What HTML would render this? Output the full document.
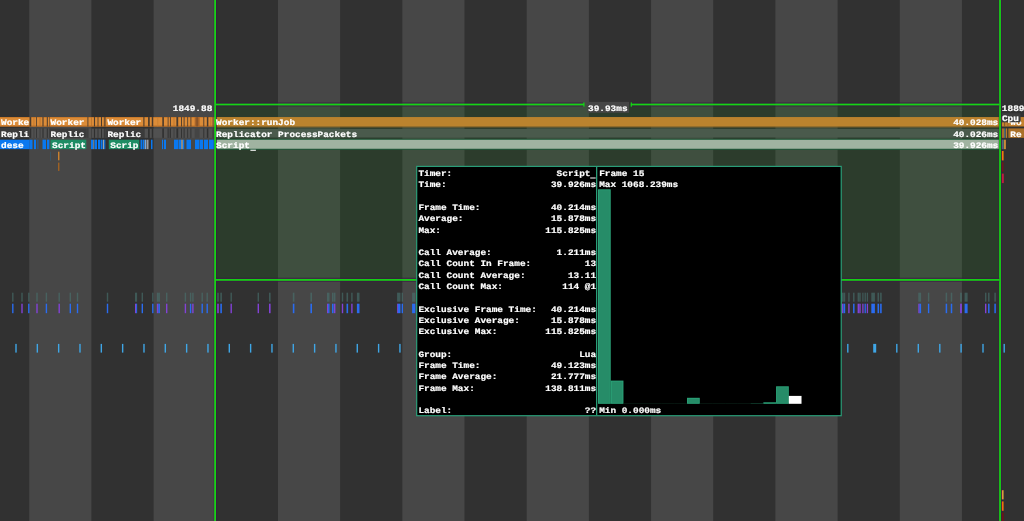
<!DOCTYPE html>
<html><head><meta charset="utf-8"><title>MicroProfile</title>
<style>
html,body{margin:0;padding:0;background:#313131;overflow:hidden}
body{width:1024px;height:521px;font-family:"Liberation Mono",monospace}
svg{display:block;will-change:transform;text-rendering:geometricPrecision}
</style></head><body>
<svg width="1024" height="521" viewBox="0 0 1024 521">
<rect x="0.00" y="0.00" width="1024.00" height="521.00" fill="#313131"/>
<rect x="29.25" y="0.00" width="62.18" height="521.00" fill="#474747"/>
<rect x="153.61" y="0.00" width="62.18" height="521.00" fill="#474747"/>
<rect x="277.97" y="0.00" width="62.18" height="521.00" fill="#474747"/>
<rect x="402.33" y="0.00" width="62.18" height="521.00" fill="#474747"/>
<rect x="526.69" y="0.00" width="62.18" height="521.00" fill="#474747"/>
<rect x="651.05" y="0.00" width="62.18" height="521.00" fill="#474747"/>
<rect x="775.41" y="0.00" width="62.18" height="521.00" fill="#474747"/>
<rect x="899.77" y="0.00" width="62.18" height="521.00" fill="#474747"/>
<rect x="0.00" y="117.05" width="215.00" height="9.45" fill="#dc8c38"/>
<rect x="0.00" y="117.05" width="215.00" height="0.80" fill="#c87828"/>
<rect x="0.00" y="125.60" width="215.00" height="0.90" fill="#b86a22"/>
<rect x="29.55" y="117.05" width="1.70" height="9.45" fill="#4a3a2c"/>
<rect x="36.10" y="117.05" width="0.80" height="9.45" fill="#4a3a2c"/>
<rect x="42.45" y="117.05" width="1.10" height="9.45" fill="#4a3a2c"/>
<rect x="46.80" y="117.05" width="1.00" height="9.45" fill="#4a3a2c"/>
<rect x="49.25" y="117.05" width="0.50" height="9.45" fill="#4a3a2c"/>
<rect x="87.45" y="117.05" width="0.90" height="9.45" fill="#4a3a2c"/>
<rect x="93.95" y="117.05" width="1.10" height="9.45" fill="#4a3a2c"/>
<rect x="97.60" y="117.05" width="0.80" height="9.45" fill="#4a3a2c"/>
<rect x="101.00" y="117.05" width="1.00" height="9.45" fill="#4a3a2c"/>
<rect x="103.90" y="117.05" width="0.80" height="9.45" fill="#4a3a2c"/>
<rect x="105.45" y="117.05" width="0.50" height="9.45" fill="#4a3a2c"/>
<rect x="143.35" y="117.05" width="1.10" height="9.45" fill="#4a3a2c"/>
<rect x="148.05" y="117.05" width="1.70" height="9.45" fill="#4a3a2c"/>
<rect x="151.75" y="117.05" width="1.50" height="9.45" fill="#4a3a2c"/>
<rect x="162.30" y="117.05" width="1.60" height="9.45" fill="#4a3a2c"/>
<rect x="167.70" y="117.05" width="0.80" height="9.45" fill="#4a3a2c"/>
<rect x="169.95" y="117.05" width="0.90" height="9.45" fill="#4a3a2c"/>
<rect x="176.40" y="117.05" width="1.80" height="9.45" fill="#4a3a2c"/>
<rect x="181.05" y="117.05" width="0.90" height="9.45" fill="#4a3a2c"/>
<rect x="183.65" y="117.05" width="0.90" height="9.45" fill="#4a3a2c"/>
<rect x="187.30" y="117.05" width="0.80" height="9.45" fill="#4a3a2c"/>
<rect x="190.45" y="117.05" width="0.90" height="9.45" fill="#4a3a2c"/>
<rect x="203.35" y="117.05" width="0.90" height="9.45" fill="#4a3a2c"/>
<rect x="206.85" y="117.05" width="1.50" height="9.45" fill="#4a3a2c"/>
<rect x="212.65" y="117.05" width="0.70" height="9.45" fill="#4a3a2c"/>
<rect x="194.70" y="117.05" width="4.90" height="9.45" fill="#a8652a"/>
<rect x="196.60" y="117.05" width="0.90" height="9.45" fill="#6a4526"/>
<rect x="33.60" y="117.05" width="0.70" height="9.45" fill="#b9722c"/>
<rect x="39.60" y="117.05" width="0.90" height="9.45" fill="#b9722c"/>
<rect x="91.20" y="117.05" width="0.80" height="9.45" fill="#b9722c"/>
<rect x="157.50" y="117.05" width="0.70" height="9.45" fill="#c47c30"/>
<rect x="173.60" y="117.05" width="0.80" height="9.45" fill="#b9722c"/>
<rect x="210.40" y="117.05" width="0.80" height="9.45" fill="#b9722c"/>
<rect x="0.00" y="128.60" width="167.60" height="9.25" fill="#515151"/>
<rect x="170.60" y="128.60" width="44.40" height="9.25" fill="#515151"/>
<rect x="29.55" y="128.40" width="1.70" height="9.45" fill="#303030"/>
<rect x="36.10" y="128.40" width="0.80" height="9.45" fill="#303030"/>
<rect x="42.45" y="128.40" width="1.10" height="9.45" fill="#303030"/>
<rect x="46.80" y="128.40" width="1.00" height="9.45" fill="#303030"/>
<rect x="49.25" y="128.40" width="0.50" height="9.45" fill="#303030"/>
<rect x="87.45" y="128.40" width="0.90" height="9.45" fill="#303030"/>
<rect x="93.95" y="128.40" width="1.10" height="9.45" fill="#303030"/>
<rect x="97.60" y="128.40" width="0.80" height="9.45" fill="#303030"/>
<rect x="101.00" y="128.40" width="1.00" height="9.45" fill="#303030"/>
<rect x="103.90" y="128.40" width="0.80" height="9.45" fill="#303030"/>
<rect x="105.45" y="128.40" width="0.50" height="9.45" fill="#303030"/>
<rect x="143.35" y="128.40" width="1.10" height="9.45" fill="#303030"/>
<rect x="148.05" y="128.40" width="1.70" height="9.45" fill="#303030"/>
<rect x="151.75" y="128.40" width="1.50" height="9.45" fill="#303030"/>
<rect x="162.30" y="128.40" width="1.60" height="9.45" fill="#303030"/>
<rect x="167.70" y="128.40" width="0.80" height="9.45" fill="#303030"/>
<rect x="169.95" y="128.40" width="0.90" height="9.45" fill="#303030"/>
<rect x="176.40" y="128.40" width="1.80" height="9.45" fill="#303030"/>
<rect x="181.05" y="128.40" width="0.90" height="9.45" fill="#303030"/>
<rect x="183.65" y="128.40" width="0.90" height="9.45" fill="#303030"/>
<rect x="187.30" y="128.40" width="0.80" height="9.45" fill="#303030"/>
<rect x="190.45" y="128.40" width="0.90" height="9.45" fill="#303030"/>
<rect x="203.35" y="128.40" width="0.90" height="9.45" fill="#303030"/>
<rect x="206.85" y="128.40" width="1.50" height="9.45" fill="#303030"/>
<rect x="212.65" y="128.40" width="0.70" height="9.45" fill="#303030"/>
<rect x="194.70" y="128.40" width="4.90" height="9.45" fill="#444"/>
<rect x="33.60" y="128.40" width="0.70" height="9.45" fill="#3c3c3c"/>
<rect x="39.60" y="128.40" width="0.90" height="9.45" fill="#3c3c3c"/>
<rect x="91.20" y="128.40" width="0.80" height="9.45" fill="#3c3c3c"/>
<rect x="173.60" y="128.40" width="0.80" height="9.45" fill="#3c3c3c"/>
<rect x="0.00" y="128.40" width="29.20" height="9.45" fill="#3b3b3b"/>
<rect x="49.80" y="128.40" width="37.00" height="9.45" fill="#3b3b3b"/>
<rect x="105.90" y="128.40" width="37.20" height="9.45" fill="#3b3b3b"/>
<rect x="0.00" y="139.70" width="29.70" height="9.45" fill="#0a78f0"/>
<rect x="29.70" y="139.70" width="2.80" height="9.45" fill="#0a78f0"/>
<rect x="34.00" y="139.70" width="2.00" height="9.45" fill="#0a78f0"/>
<rect x="37.40" y="139.70" width="1.00" height="9.45" fill="#1b5ea8"/>
<rect x="42.50" y="139.70" width="3.50" height="9.45" fill="#0a78f0"/>
<rect x="47.00" y="139.70" width="2.40" height="9.45" fill="#0a78f0"/>
<rect x="50.50" y="139.70" width="35.80" height="9.45" fill="#1e8c64"/>
<rect x="91.00" y="139.70" width="2.00" height="9.45" fill="#0a78f0"/>
<rect x="93.30" y="139.70" width="1.00" height="9.45" fill="#8a9aa8"/>
<rect x="94.60" y="139.70" width="2.40" height="9.45" fill="#0a78f0"/>
<rect x="98.00" y="139.70" width="2.00" height="9.45" fill="#0a78f0"/>
<rect x="100.60" y="139.70" width="2.00" height="9.45" fill="#0a78f0"/>
<rect x="103.00" y="139.70" width="1.00" height="9.45" fill="#9aa6ae"/>
<rect x="104.20" y="139.70" width="1.10" height="9.45" fill="#0a78f0"/>
<rect x="108.80" y="139.70" width="30.50" height="9.45" fill="#1e8c64"/>
<rect x="140.50" y="139.70" width="1.50" height="9.45" fill="#0a78f0"/>
<rect x="142.50" y="139.70" width="1.50" height="9.45" fill="#0a78f0"/>
<rect x="144.50" y="139.70" width="1.50" height="9.45" fill="#6fa8e8"/>
<rect x="146.50" y="139.70" width="2.00" height="9.45" fill="#9a9aa0"/>
<rect x="151.00" y="139.70" width="1.50" height="9.45" fill="#0a78f0"/>
<rect x="162.00" y="139.70" width="1.10" height="9.45" fill="#0a78f0"/>
<rect x="164.00" y="139.70" width="2.00" height="9.45" fill="#0a78f0"/>
<rect x="174.00" y="139.70" width="4.00" height="9.45" fill="#0a78f0"/>
<rect x="178.50" y="139.70" width="2.50" height="9.45" fill="#0a78f0"/>
<rect x="181.50" y="139.70" width="1.00" height="9.45" fill="#c8d0d0"/>
<rect x="183.00" y="139.70" width="1.20" height="9.45" fill="#0a78f0"/>
<rect x="186.50" y="139.70" width="4.50" height="9.45" fill="#0a78f0"/>
<rect x="195.00" y="139.70" width="4.00" height="9.45" fill="#0a78f0"/>
<rect x="199.50" y="139.70" width="3.50" height="9.45" fill="#0a78f0"/>
<rect x="204.00" y="139.70" width="4.00" height="9.45" fill="#0a78f0"/>
<rect x="209.00" y="139.70" width="5.60" height="9.45" fill="#0a78f0"/>
<rect x="58.10" y="151.70" width="1.30" height="8.60" fill="#d8882c"/>
<rect x="58.10" y="162.60" width="1.30" height="8.30" fill="#a86420"/>
<rect x="50.10" y="151.70" width="0.80" height="9.00" fill="#32607a" opacity="0.7"/>
<rect x="1001.60" y="117.05" width="22.40" height="9.45" fill="#c4822f"/>
<rect x="1004.20" y="117.05" width="0.90" height="9.45" fill="#7a5428"/>
<rect x="1007.60" y="117.05" width="0.70" height="9.45" fill="#8a5e2a"/>
<rect x="1001.60" y="128.40" width="2.60" height="9.45" fill="#a87028"/>
<rect x="1004.40" y="128.40" width="1.00" height="9.45" fill="#5a88a0"/>
<rect x="1005.90" y="128.40" width="1.30" height="9.45" fill="#b87a2c"/>
<rect x="1008.30" y="128.40" width="15.70" height="9.45" fill="#aa7028"/>
<rect x="1001.60" y="139.70" width="1.00" height="9.45" fill="#7a6a90"/>
<rect x="1002.70" y="139.70" width="0.80" height="9.45" fill="#4a8a9a"/>
<rect x="1003.90" y="139.70" width="2.00" height="9.45" fill="#c88a38"/>
<rect x="1001.60" y="151.00" width="2.00" height="9.45" fill="#f07a10"/>
<rect x="1001.60" y="162.30" width="2.00" height="9.45" fill="#6e1a1c"/>
<rect x="1001.60" y="173.60" width="2.20" height="9.45" fill="#c0203c"/>
<rect x="1001.60" y="490.20" width="2.00" height="9.20" fill="#e09a40"/>
<rect x="1001.60" y="501.40" width="2.00" height="9.40" fill="#f07010"/>
<rect x="1001.60" y="512.60" width="2.20" height="9.00" fill="#6a1818"/>
<rect x="12.10" y="292.70" width="1.40" height="9.00" fill="#4a7571" opacity="0.6"/>
<rect x="12.10" y="303.70" width="1.40" height="9.50" fill="#2a6cf0"/>
<rect x="21.30" y="292.70" width="1.40" height="9.00" fill="#4a7571" opacity="0.6"/>
<rect x="21.30" y="303.70" width="1.40" height="9.50" fill="#8242d6"/>
<rect x="28.10" y="292.70" width="1.40" height="9.00" fill="#4a7571" opacity="0.6"/>
<rect x="28.10" y="303.70" width="1.40" height="9.50" fill="#2a6cf0"/>
<rect x="36.30" y="292.70" width="1.40" height="9.00" fill="#4a7571" opacity="0.6"/>
<rect x="36.30" y="303.70" width="1.40" height="9.50" fill="#8242d6"/>
<rect x="45.70" y="292.70" width="1.40" height="9.00" fill="#4a7571" opacity="0.6"/>
<rect x="45.70" y="303.70" width="1.40" height="9.50" fill="#2a6cf0"/>
<rect x="58.50" y="292.70" width="1.40" height="9.00" fill="#4a7571" opacity="0.6"/>
<rect x="58.50" y="303.70" width="1.40" height="9.50" fill="#8242d6"/>
<rect x="69.60" y="292.70" width="1.40" height="9.00" fill="#4a7571" opacity="0.6"/>
<rect x="69.60" y="303.70" width="1.40" height="9.50" fill="#2a6cf0"/>
<rect x="76.80" y="292.70" width="1.40" height="9.00" fill="#4a7571" opacity="0.6"/>
<rect x="76.80" y="303.70" width="1.40" height="9.50" fill="#2a6cf0"/>
<rect x="106.80" y="292.70" width="1.40" height="9.00" fill="#4a7571" opacity="0.6"/>
<rect x="106.80" y="303.70" width="1.40" height="9.50" fill="#2a6cf0"/>
<rect x="135.00" y="292.70" width="1.20" height="9.00" fill="#4a7571" opacity="0.6"/>
<rect x="135.00" y="303.70" width="1.20" height="9.50" fill="#8242d6"/>
<rect x="136.10" y="292.70" width="1.00" height="9.00" fill="#4a7571" opacity="0.6"/>
<rect x="136.10" y="303.70" width="1.00" height="9.50" fill="#2a6cf0"/>
<rect x="141.60" y="292.70" width="1.40" height="9.00" fill="#4a7571" opacity="0.6"/>
<rect x="141.60" y="303.70" width="1.40" height="9.50" fill="#2a6cf0"/>
<rect x="152.10" y="292.70" width="1.40" height="9.00" fill="#4a7571" opacity="0.6"/>
<rect x="152.10" y="303.70" width="1.40" height="9.50" fill="#2a6cf0"/>
<rect x="156.85" y="292.70" width="1.50" height="9.00" fill="#4a7571" opacity="0.6"/>
<rect x="156.85" y="303.70" width="1.50" height="9.50" fill="#8242d6"/>
<rect x="158.30" y="292.70" width="1.60" height="9.00" fill="#4a7571" opacity="0.6"/>
<rect x="158.30" y="303.70" width="1.60" height="9.50" fill="#2a6cf0"/>
<rect x="166.00" y="292.70" width="1.40" height="9.00" fill="#4a7571" opacity="0.6"/>
<rect x="166.00" y="303.70" width="1.40" height="9.50" fill="#8242d6"/>
<rect x="184.70" y="292.70" width="1.40" height="9.00" fill="#4a7571" opacity="0.6"/>
<rect x="184.70" y="303.70" width="1.40" height="9.50" fill="#8242d6"/>
<rect x="189.90" y="292.70" width="1.40" height="9.00" fill="#4a7571" opacity="0.6"/>
<rect x="189.90" y="303.70" width="1.40" height="9.50" fill="#2a6cf0"/>
<rect x="192.20" y="292.70" width="1.40" height="9.00" fill="#4a7571" opacity="0.6"/>
<rect x="192.20" y="303.70" width="1.40" height="9.50" fill="#8242d6"/>
<rect x="201.50" y="292.70" width="1.40" height="9.00" fill="#4a7571" opacity="0.6"/>
<rect x="201.50" y="303.70" width="1.40" height="9.50" fill="#2a6cf0"/>
<rect x="206.50" y="292.70" width="1.40" height="9.00" fill="#4a7571" opacity="0.6"/>
<rect x="206.50" y="303.70" width="1.40" height="9.50" fill="#2a6cf0"/>
<rect x="217.20" y="292.70" width="1.60" height="9.00" fill="#4a7571" opacity="0.6"/>
<rect x="217.20" y="303.70" width="1.60" height="9.50" fill="#8242d6"/>
<rect x="220.30" y="292.70" width="1.60" height="9.00" fill="#4a7571" opacity="0.6"/>
<rect x="220.30" y="303.70" width="1.60" height="9.50" fill="#2a6cf0"/>
<rect x="230.50" y="292.70" width="1.40" height="9.00" fill="#4a7571" opacity="0.6"/>
<rect x="230.50" y="303.70" width="1.40" height="9.50" fill="#8242d6"/>
<rect x="257.60" y="292.70" width="1.40" height="9.00" fill="#4a7571" opacity="0.6"/>
<rect x="257.60" y="303.70" width="1.40" height="9.50" fill="#8242d6"/>
<rect x="269.00" y="292.70" width="1.60" height="9.00" fill="#4a7571" opacity="0.6"/>
<rect x="269.00" y="303.70" width="1.60" height="9.50" fill="#8242d6"/>
<rect x="292.80" y="292.70" width="1.60" height="9.00" fill="#4a7571" opacity="0.6"/>
<rect x="292.80" y="303.70" width="1.60" height="9.50" fill="#2a6cf0"/>
<rect x="310.40" y="292.70" width="1.60" height="9.00" fill="#4a7571" opacity="0.6"/>
<rect x="310.40" y="303.70" width="1.60" height="9.50" fill="#2a6cf0"/>
<rect x="327.00" y="292.70" width="1.20" height="9.00" fill="#4a7571" opacity="0.6"/>
<rect x="327.00" y="303.70" width="1.20" height="9.50" fill="#8242d6"/>
<rect x="328.10" y="292.70" width="1.40" height="9.00" fill="#4a7571" opacity="0.6"/>
<rect x="328.10" y="303.70" width="1.40" height="9.50" fill="#2a6cf0"/>
<rect x="332.00" y="292.70" width="1.60" height="9.00" fill="#4a7571" opacity="0.6"/>
<rect x="332.00" y="303.70" width="1.60" height="9.50" fill="#2a6cf0"/>
<rect x="334.00" y="292.70" width="1.40" height="9.00" fill="#4a7571" opacity="0.6"/>
<rect x="334.00" y="303.70" width="1.40" height="9.50" fill="#8242d6"/>
<rect x="341.80" y="292.70" width="1.40" height="9.00" fill="#4a7571" opacity="0.6"/>
<rect x="341.80" y="303.70" width="1.40" height="9.50" fill="#8242d6"/>
<rect x="346.50" y="292.70" width="1.60" height="9.00" fill="#4a7571" opacity="0.6"/>
<rect x="346.50" y="303.70" width="1.60" height="9.50" fill="#2a6cf0"/>
<rect x="351.20" y="292.70" width="1.40" height="9.00" fill="#4a7571" opacity="0.6"/>
<rect x="351.20" y="303.70" width="1.40" height="9.50" fill="#8242d6"/>
<rect x="356.90" y="292.70" width="2.60" height="9.00" fill="#4a7571" opacity="0.6"/>
<rect x="356.90" y="303.70" width="2.60" height="9.50" fill="#2a6cf0"/>
<rect x="397.10" y="292.70" width="1.00" height="9.00" fill="#4a7571" opacity="0.6"/>
<rect x="397.10" y="303.70" width="1.00" height="9.50" fill="#8242d6"/>
<rect x="397.90" y="292.70" width="2.60" height="9.00" fill="#4a7571" opacity="0.6"/>
<rect x="397.90" y="303.70" width="2.60" height="9.50" fill="#2a6cf0"/>
<rect x="401.60" y="292.70" width="1.40" height="9.00" fill="#4a7571" opacity="0.6"/>
<rect x="401.60" y="303.70" width="1.40" height="9.50" fill="#2a6cf0"/>
<rect x="412.10" y="292.70" width="3.20" height="9.00" fill="#4a7571" opacity="0.6"/>
<rect x="412.10" y="303.70" width="3.20" height="9.50" fill="#2a6cf0"/>
<rect x="841.90" y="292.70" width="1.40" height="9.00" fill="#4a7571" opacity="0.6"/>
<rect x="841.90" y="303.70" width="1.40" height="9.50" fill="#8242d6"/>
<rect x="843.40" y="292.70" width="1.80" height="9.00" fill="#4a7571" opacity="0.6"/>
<rect x="843.40" y="303.70" width="1.80" height="9.50" fill="#2a6cf0"/>
<rect x="848.20" y="292.70" width="1.40" height="9.00" fill="#4a7571" opacity="0.6"/>
<rect x="848.20" y="303.70" width="1.40" height="9.50" fill="#8242d6"/>
<rect x="853.05" y="292.70" width="1.50" height="9.00" fill="#4a7571" opacity="0.6"/>
<rect x="853.05" y="303.70" width="1.50" height="9.50" fill="#2a6cf0"/>
<rect x="857.60" y="292.70" width="1.60" height="9.00" fill="#4a7571" opacity="0.6"/>
<rect x="857.60" y="303.70" width="1.60" height="9.50" fill="#8242d6"/>
<rect x="859.30" y="292.70" width="1.40" height="9.00" fill="#4a7571" opacity="0.6"/>
<rect x="859.30" y="303.70" width="1.40" height="9.50" fill="#8242d6"/>
<rect x="862.25" y="292.70" width="1.30" height="9.00" fill="#4a7571" opacity="0.6"/>
<rect x="862.25" y="303.70" width="1.30" height="9.50" fill="#8242d6"/>
<rect x="864.55" y="292.70" width="1.30" height="9.00" fill="#4a7571" opacity="0.6"/>
<rect x="864.55" y="303.70" width="1.30" height="9.50" fill="#2a6cf0"/>
<rect x="866.75" y="292.70" width="1.30" height="9.00" fill="#4a7571" opacity="0.6"/>
<rect x="866.75" y="303.70" width="1.30" height="9.50" fill="#8242d6"/>
<rect x="871.30" y="292.70" width="3.60" height="9.00" fill="#4a7571" opacity="0.6"/>
<rect x="871.30" y="303.70" width="3.60" height="9.50" fill="#2a6cf0"/>
<rect x="877.50" y="292.70" width="1.60" height="9.00" fill="#4a7571" opacity="0.6"/>
<rect x="877.50" y="303.70" width="1.60" height="9.50" fill="#2a6cf0"/>
<rect x="880.10" y="292.70" width="1.60" height="9.00" fill="#4a7571" opacity="0.6"/>
<rect x="880.10" y="303.70" width="1.60" height="9.50" fill="#2a6cf0"/>
<rect x="918.30" y="292.70" width="1.40" height="9.00" fill="#4a7571" opacity="0.6"/>
<rect x="918.30" y="303.70" width="1.40" height="9.50" fill="#8242d6"/>
<rect x="919.50" y="292.70" width="1.60" height="9.00" fill="#4a7571" opacity="0.6"/>
<rect x="919.50" y="303.70" width="1.60" height="9.50" fill="#2a6cf0"/>
<rect x="927.90" y="292.70" width="1.40" height="9.00" fill="#4a7571" opacity="0.6"/>
<rect x="927.90" y="303.70" width="1.40" height="9.50" fill="#2a6cf0"/>
<rect x="945.65" y="292.70" width="1.50" height="9.00" fill="#4a7571" opacity="0.6"/>
<rect x="945.65" y="303.70" width="1.50" height="9.50" fill="#2a6cf0"/>
<rect x="950.75" y="292.70" width="1.50" height="9.00" fill="#4a7571" opacity="0.6"/>
<rect x="950.75" y="303.70" width="1.50" height="9.50" fill="#2a6cf0"/>
<rect x="960.10" y="292.70" width="1.80" height="9.00" fill="#4a7571" opacity="0.6"/>
<rect x="960.10" y="303.70" width="1.80" height="9.50" fill="#8242d6"/>
<rect x="964.60" y="292.70" width="3.00" height="9.00" fill="#4a7571" opacity="0.6"/>
<rect x="964.60" y="303.70" width="3.00" height="9.50" fill="#2a6cf0"/>
<rect x="985.00" y="292.70" width="1.40" height="9.00" fill="#4a7571" opacity="0.6"/>
<rect x="985.00" y="303.70" width="1.40" height="9.50" fill="#8242d6"/>
<rect x="988.05" y="292.70" width="1.50" height="9.00" fill="#4a7571" opacity="0.6"/>
<rect x="988.05" y="303.70" width="1.50" height="9.50" fill="#2a6cf0"/>
<rect x="994.35" y="292.70" width="1.50" height="9.00" fill="#4a7571" opacity="0.6"/>
<rect x="994.35" y="303.70" width="1.50" height="9.50" fill="#2a6cf0"/>
<rect x="15.30" y="343.90" width="1.40" height="8.70" fill="#3fa6e6"/>
<rect x="36.63" y="343.90" width="1.40" height="8.70" fill="#3fa6e6"/>
<rect x="57.96" y="343.90" width="1.40" height="8.70" fill="#3fa6e6"/>
<rect x="79.29" y="343.90" width="1.40" height="8.70" fill="#3fa6e6"/>
<rect x="100.62" y="343.90" width="1.40" height="8.70" fill="#3fa6e6"/>
<rect x="121.95" y="343.90" width="1.40" height="8.70" fill="#3fa6e6"/>
<rect x="143.28" y="343.90" width="1.40" height="8.70" fill="#3fa6e6"/>
<rect x="164.61" y="343.90" width="1.40" height="8.70" fill="#3fa6e6"/>
<rect x="185.94" y="343.90" width="1.40" height="8.70" fill="#3fa6e6"/>
<rect x="207.27" y="343.90" width="1.40" height="8.70" fill="#3fa6e6"/>
<rect x="228.60" y="343.90" width="1.40" height="8.70" fill="#3fa6e6"/>
<rect x="249.93" y="343.90" width="1.40" height="8.70" fill="#3fa6e6"/>
<rect x="271.26" y="343.90" width="1.40" height="8.70" fill="#3fa6e6"/>
<rect x="292.59" y="343.90" width="1.40" height="8.70" fill="#3fa6e6"/>
<rect x="313.92" y="343.90" width="1.40" height="8.70" fill="#3fa6e6"/>
<rect x="335.25" y="343.90" width="1.40" height="8.70" fill="#3fa6e6"/>
<rect x="356.58" y="343.90" width="1.40" height="8.70" fill="#3fa6e6"/>
<rect x="377.91" y="343.90" width="1.40" height="8.70" fill="#3fa6e6"/>
<rect x="399.24" y="343.90" width="1.40" height="8.70" fill="#3fa6e6"/>
<rect x="847.10" y="343.90" width="1.40" height="8.70" fill="#3fa6e6"/>
<rect x="896.10" y="343.90" width="1.40" height="8.70" fill="#3fa6e6"/>
<rect x="917.60" y="343.90" width="1.40" height="8.70" fill="#3fa6e6"/>
<rect x="939.10" y="343.90" width="1.40" height="8.70" fill="#3fa6e6"/>
<rect x="960.40" y="343.90" width="1.40" height="8.70" fill="#3fa6e6"/>
<rect x="982.30" y="343.90" width="1.40" height="8.70" fill="#3fa6e6"/>
<rect x="1003.50" y="343.90" width="1.40" height="8.70" fill="#3fa6e6"/>
<rect x="873.20" y="343.90" width="3.00" height="8.70" fill="#3fa6e6"/>
<rect x="215.20" y="104.5" width="784.80" height="175.3" fill="#009900" opacity="0.1"/>
<rect x="216.00" y="117.05" width="783.20" height="9.65" fill="#bb832e"/>
<rect x="216.00" y="126.70" width="783.20" height="0.70" fill="#8a6428"/>
<rect x="216.00" y="128.90" width="783.20" height="8.65" fill="#4a5a4c"/>
<rect x="216.00" y="138.80" width="783.20" height="11.05" fill="#21583a"/>
<rect x="216.00" y="139.80" width="783.20" height="8.95" fill="#a0b3a1"/>
<rect x="213.35" y="0.00" width="0.90" height="521.00" fill="#3c1a46" opacity="0.3"/>
<rect x="216.00" y="0.00" width="1.00" height="521.00" fill="#3c1a46" opacity="0.75"/>
<rect x="214.25" y="0.00" width="1.75" height="521.00" fill="#16d416"/>
<rect x="998.25" y="0.00" width="0.90" height="521.00" fill="#3c1a46" opacity="0.3"/>
<rect x="1000.90" y="0.00" width="1.00" height="521.00" fill="#3c1a46" opacity="0.75"/>
<rect x="999.15" y="0.00" width="1.75" height="521.00" fill="#16d416"/>
<rect x="216.00" y="102.30" width="368.10" height="1.30" fill="#3c1a46" opacity="0.6"/>
<rect x="216.00" y="105.40" width="368.10" height="1.20" fill="#3c1a46" opacity="0.6"/>
<rect x="216.00" y="103.65" width="368.10" height="1.70" fill="#16d416"/>
<rect x="630.80" y="102.30" width="368.40" height="1.30" fill="#3c1a46" opacity="0.6"/>
<rect x="630.80" y="105.40" width="368.40" height="1.20" fill="#3c1a46" opacity="0.6"/>
<rect x="630.80" y="103.65" width="368.40" height="1.70" fill="#16d416"/>
<rect x="583.30" y="102.40" width="1.20" height="4.30" fill="#16d416"/>
<rect x="630.70" y="102.40" width="1.20" height="4.30" fill="#16d416"/>
<rect x="216.00" y="277.70" width="783.20" height="1.30" fill="#3c1a46" opacity="0.6"/>
<rect x="216.00" y="280.80" width="783.20" height="1.20" fill="#3c1a46" opacity="0.6"/>
<rect x="216.00" y="279.05" width="783.20" height="1.70" fill="#16d416"/>
<rect x="587.30" y="101.90" width="41.70" height="10.90" fill="#464646"/>
<rect x="1002.00" y="113.40" width="18.40" height="8.80" fill="#3c3c3c"/>
<rect x="416.10" y="165.80" width="425.70" height="250.50" fill="#2a9d78"/>
<rect x="417.30" y="167.00" width="423.30" height="248.10" fill="#000"/>
<rect x="596.00" y="167.00" width="1.30" height="248.00" fill="#2a9d78"/>
<rect x="598.00" y="189.30" width="12.72" height="214.50" fill="#2ba57a"/>
<rect x="598.90" y="190.20" width="10.92" height="212.70" fill="#268c68"/>
<rect x="610.72" y="380.60" width="12.72" height="23.20" fill="#2ba57a"/>
<rect x="611.62" y="381.50" width="10.92" height="21.40" fill="#268c68"/>
<rect x="623.44" y="403.50" width="12.72" height="0.30" fill="#14402f"/>
<rect x="636.16" y="403.50" width="12.72" height="0.30" fill="#14402f"/>
<rect x="648.88" y="403.50" width="12.72" height="0.30" fill="#14402f"/>
<rect x="661.60" y="403.50" width="12.72" height="0.30" fill="#14402f"/>
<rect x="674.32" y="403.50" width="12.72" height="0.30" fill="#14402f"/>
<rect x="687.04" y="397.80" width="12.72" height="6.00" fill="#2ba57a"/>
<rect x="687.94" y="398.70" width="10.92" height="4.20" fill="#268c68"/>
<rect x="699.76" y="403.50" width="12.72" height="0.30" fill="#14402f"/>
<rect x="712.48" y="403.50" width="12.72" height="0.30" fill="#14402f"/>
<rect x="725.20" y="403.50" width="12.72" height="0.30" fill="#14402f"/>
<rect x="737.92" y="403.50" width="12.72" height="0.30" fill="#14402f"/>
<rect x="750.64" y="403.50" width="12.72" height="0.30" fill="#2ba57a"/>
<rect x="763.36" y="402.30" width="12.72" height="1.50" fill="#2ba57a"/>
<rect x="776.08" y="386.30" width="12.72" height="17.50" fill="#2ba57a"/>
<rect x="776.98" y="387.20" width="10.92" height="15.70" fill="#268c68"/>
<rect x="788.80" y="395.90" width="12.72" height="7.90" fill="#fff"/>
<g font-family="'Liberation Mono', monospace" font-weight="bold" font-size="8.3px" transform="scale(1.1325,1)" stroke="#fff" stroke-width="0.2" style="white-space:pre">
<text x="0.883" y="125.25" fill="#fff">Worke</text>
<text x="44.679" y="125.25" fill="#fff">Worker</text>
<text x="94.832" y="125.25" fill="#fff">Worker</text>
<text x="0.883" y="136.60" fill="#fff">Repli</text>
<text x="44.679" y="136.60" fill="#fff">Replic</text>
<text x="94.832" y="136.60" fill="#fff">Replic</text>
<text x="0.883" y="147.90" fill="#fff">dese</text>
<text x="46.003" y="147.90" fill="#fff">Script</text>
<text x="97.393" y="147.90" fill="#fff">Scrip</text>
<text x="190.812" y="125.25" fill="#fff">Worker::runJob</text>
<text x="190.812" y="136.60" fill="#fff">Replicator ProcessPackets</text>
<text x="190.812" y="147.90" fill="#fff">Script</text>
<text x="881.478" y="125.25" text-anchor="end" fill="#fff">40.028ms</text>
<text x="881.478" y="136.60" text-anchor="end" fill="#fff">40.026ms</text>
<text x="881.478" y="147.90" text-anchor="end" fill="#fff">39.926ms</text>
<text x="892.162" y="125.25" fill="#fff">Wo</text>
<text x="892.162" y="136.60" fill="#fff">Re</text>
</g>
<rect x="1002.00" y="113.40" width="18.40" height="8.80" fill="#3c3c3c"/>
<g font-family="'Liberation Mono', monospace" font-weight="bold" font-size="8.3px" transform="scale(1.1325,1)" stroke="#fff" stroke-width="0.2" style="white-space:pre">
<text x="884.745" y="121.10" fill="#fff">Cpu</text>
<text x="187.456" y="110.90" text-anchor="end" fill="#fff">1849.88</text>
<text x="519.280" y="110.70" fill="#fff">39.93ms</text>
<text x="884.656" y="110.90" fill="#fff">1889.81</text>
<text x="369.438" y="176.10" fill="#fff">Timer:</text>
<text x="526.344" y="176.10" text-anchor="end" fill="#fff"></text>
<text x="369.438" y="187.39" fill="#fff">Time:</text>
<text x="526.344" y="187.39" text-anchor="end" fill="#fff">39.926ms</text>
<text x="369.438" y="209.97" fill="#fff">Frame Time:</text>
<text x="526.344" y="209.97" text-anchor="end" fill="#fff">40.214ms</text>
<text x="369.438" y="221.26" fill="#fff">Average:</text>
<text x="526.344" y="221.26" text-anchor="end" fill="#fff">15.878ms</text>
<text x="369.438" y="232.55" fill="#fff">Max:</text>
<text x="526.344" y="232.55" text-anchor="end" fill="#fff">115.825ms</text>
<text x="369.438" y="255.13" fill="#fff">Call Average:</text>
<text x="526.344" y="255.13" text-anchor="end" fill="#fff">1.211ms</text>
<text x="369.438" y="266.42" fill="#fff">Call Count In Frame:</text>
<text x="526.344" y="266.42" text-anchor="end" fill="#fff">13</text>
<text x="369.438" y="277.71" fill="#fff">Call Count Average:</text>
<text x="526.344" y="277.71" text-anchor="end" fill="#fff">13.11</text>
<text x="369.438" y="289.00" fill="#fff">Call Count Max:</text>
<text x="526.344" y="289.00" text-anchor="end" fill="#fff">114 @1</text>
<text x="369.438" y="311.58" fill="#fff">Exclusive Frame Time:</text>
<text x="526.344" y="311.58" text-anchor="end" fill="#fff">40.214ms</text>
<text x="369.438" y="322.87" fill="#fff">Exclusive Average:</text>
<text x="526.344" y="322.87" text-anchor="end" fill="#fff">15.878ms</text>
<text x="369.438" y="334.16" fill="#fff">Exclusive Max:</text>
<text x="526.344" y="334.16" text-anchor="end" fill="#fff">115.825ms</text>
<text x="369.438" y="356.74" fill="#fff">Group:</text>
<text x="526.344" y="356.74" text-anchor="end" fill="#fff">Lua</text>
<text x="369.438" y="368.03" fill="#fff">Frame Time:</text>
<text x="526.344" y="368.03" text-anchor="end" fill="#fff">49.123ms</text>
<text x="369.438" y="379.32" fill="#fff">Frame Average:</text>
<text x="526.344" y="379.32" text-anchor="end" fill="#fff">21.777ms</text>
<text x="369.438" y="390.61" fill="#fff">Frame Max:</text>
<text x="526.344" y="390.61" text-anchor="end" fill="#fff">138.811ms</text>
<text x="369.438" y="413.19" fill="#fff">Label:</text>
<text x="526.344" y="413.19" text-anchor="end" fill="#fff">??</text>
<text x="521.364" y="176.10" text-anchor="end" fill="#fff">Script</text>
<text x="529.081" y="176.10" fill="#fff">Frame 15</text>
<text x="529.081" y="187.39" fill="#fff">Max 1068.239ms</text>
<text x="529.081" y="412.89" fill="#fff">Min 0.000ms</text>
</g>
<rect x="250.40" y="149.70" width="5.50" height="1.10" fill="#fff"/>
<rect x="590.20" y="177.50" width="5.50" height="1.00" fill="#fff"/>
</svg>
</body></html>
